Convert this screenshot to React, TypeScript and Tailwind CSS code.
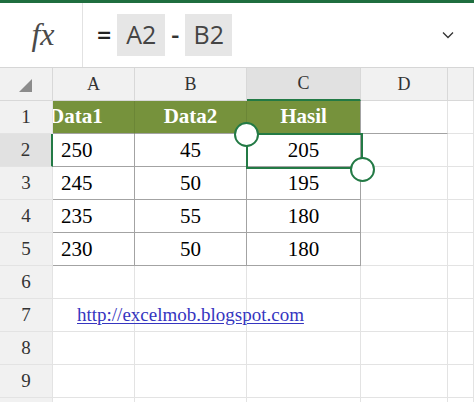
import React from 'react';

const cols = ['A', 'B', 'C', 'D', ''];
const rows = [1, 2, 3, 4, 5, 6, 7, 8, 9, 10];

const data: { a: string; b: string; c: string }[] = [
    { a: '250', b: '45', c: '205' },
    { a: '245', b: '50', c: '195' },
    { a: '235', b: '55', c: '180' },
    { a: '230', b: '50', c: '180' },
];

const serif = { fontFamily: '"Liberation Serif", "DejaVu Serif", serif' };

const App: React.FC = () => {
    return (
        <div className="w-[474px] h-[402px] overflow-hidden bg-white" style={serif}>
            <div className="h-[3px] bg-[#1f6e3f]" />

            {/* formula bar */}
            <div className="flex h-[65px] border-b border-[#d6d6d6]">
                <div className="w-[83px] flex items-center justify-center border-r border-[#e2e2e2] pb-[2px]">
                    <span className="italic text-[32px] text-[#4a4a4a] ml-[4px]">fx</span>
                </div>
                <div className="flex-1 flex items-center pl-[14px] text-[25px]" style={{ fontFamily: '"Open Sans", "Noto Sans", sans-serif' }}>
                    <span className="text-[#222] font-semibold mr-[6px]">=</span>
                    <span className="bg-[#e6e6e6] text-[#444] h-[42px] w-[48px] flex items-center justify-center">A2</span>
                    <span className="text-[#333] font-semibold mx-[6px]">-</span>
                    <span className="bg-[#e6e6e6] text-[#444] h-[42px] w-[47px] flex items-center justify-center">B2</span>
                    <svg className="ml-auto mr-[20px]" width="12" height="8" viewBox="0 0 12 8">
                        <path d="M1 1.5 L6 6.5 L11 1.5" fill="none" stroke="#333" strokeWidth="1.3" />
                    </svg>
                </div>
            </div>

            {/* sheet */}
            <div className="relative grid grid-cols-[53px_82px_112px_114px_87px_1fr] grid-rows-[33px_repeat(10,33px)]">
                {/* header row */}
                <div className="bg-[#f1f1f1] border-r border-b border-[#d8d8d8] flex items-center justify-center">
                    <svg width="13" height="13" viewBox="0 0 13 13" className="mt-[2px] -ml-[2px]">
                        <polygon points="13,0 13,13 0,13" fill="#8c8c8c" />
                    </svg>
                </div>
                {cols.map((c, i) => (
                    <div
                        key={i}
                        className={
                            c === 'C'
                                ? 'bg-[#e1e1e1] border-r border-[#d8d8d8] border-b-2 border-b-[#237a45] flex items-center justify-center text-[18px] text-[#333]'
                                : 'bg-[#f1f1f1] border-r border-b border-[#d8d8d8] flex items-center justify-center text-[18px] text-[#333]'
                        }
                    >
                        {c}
                    </div>
                ))}

                {rows.map((r) => (
                    <React.Fragment key={r}>
                        <div
                            className={
                                r === 2
                                    ? 'bg-[#e1e1e1] border-b border-[#e3e3e3] border-r-2 border-r-[#237a45] flex items-end justify-center pb-[2px] text-[19px] text-[#333]'
                                    : 'bg-[#f1f1f1] border-r border-b border-[#e3e3e3] flex items-end justify-center pb-[2px] text-[19px] text-[#333]'
                            }
                        >
                            {r < 10 ? r : ''}
                        </div>
                        {r === 1 && (
                            <>
                                <div className="bg-[#76923c] border-r border-[#6b8636] border-b border-b-[#a3a3a3] overflow-hidden flex items-center">
                                    <span className="-ml-[4px] text-[21px] font-bold text-white whitespace-nowrap">Data1</span>
                                </div>
                                <div className="bg-[#76923c] border-r border-[#6b8636] border-b border-b-[#a3a3a3] flex items-center justify-center text-[21px] font-bold text-white">
                                    Data2
                                </div>
                                <div className="bg-[#76923c] border-r border-[#a3a3a3] border-b border-b-[#a3a3a3] flex items-center justify-center text-[21px] font-bold text-white">
                                    Hasil
                                </div>
                            </>
                        )}
                        {r >= 2 && r <= 5 && (
                            <>
                                <div className="border-r border-b border-[#a3a3a3] flex items-center pl-[8px] pt-[2px] text-[21px] text-black">
                                    {data[r - 2].a}
                                </div>
                                <div className="border-r border-b border-[#a3a3a3] flex items-center justify-center pt-[2px] text-[21px] text-black">
                                    {data[r - 2].b}
                                </div>
                                <div className="border-r border-b border-[#a3a3a3] flex items-center justify-center pt-[2px] text-[21px] text-black">
                                    {data[r - 2].c}
                                </div>
                            </>
                        )}
                        {r >= 6 && (
                            <>
                                <div className={r === 7 ? 'border-r border-b border-[#e3e3e3] flex items-center pl-[24px] overflow-visible' : 'border-r border-b border-[#e3e3e3]'}>
                                    {r === 7 && (
                                        <span className="relative z-10 whitespace-nowrap text-[19px] text-[#3535c0] underline underline-offset-2">
                                            http://excelmob.blogspot.com
                                        </span>
                                    )}
                                </div>
                                <div className="border-r border-b border-[#e3e3e3]" />
                                <div className="border-r border-b border-[#e3e3e3]" />
                            </>
                        )}
                        <div className={r === 1 ? 'border-r border-b border-[#e3e3e3] border-b-[#a3a3a3]' : 'border-r border-b border-[#e3e3e3]'} />
                        <div className="border-r border-b border-[#e3e3e3]" />
                    </React.Fragment>
                ))}

                {/* selection around C2 */}
                <div className="absolute left-[246px] top-[65px] w-[117px] h-[36px] border-2 border-[#237a45] pointer-events-none" />
                <div className="absolute left-[234px] top-[54px] w-[25px] h-[25px] rounded-full bg-white border-[2.5px] border-[#237a45]" />
                <div className="absolute left-[350px] top-[89px] w-[25px] h-[25px] rounded-full bg-white border-[2.5px] border-[#237a45]" />
            </div>
        </div>
    );
};

export default App;
